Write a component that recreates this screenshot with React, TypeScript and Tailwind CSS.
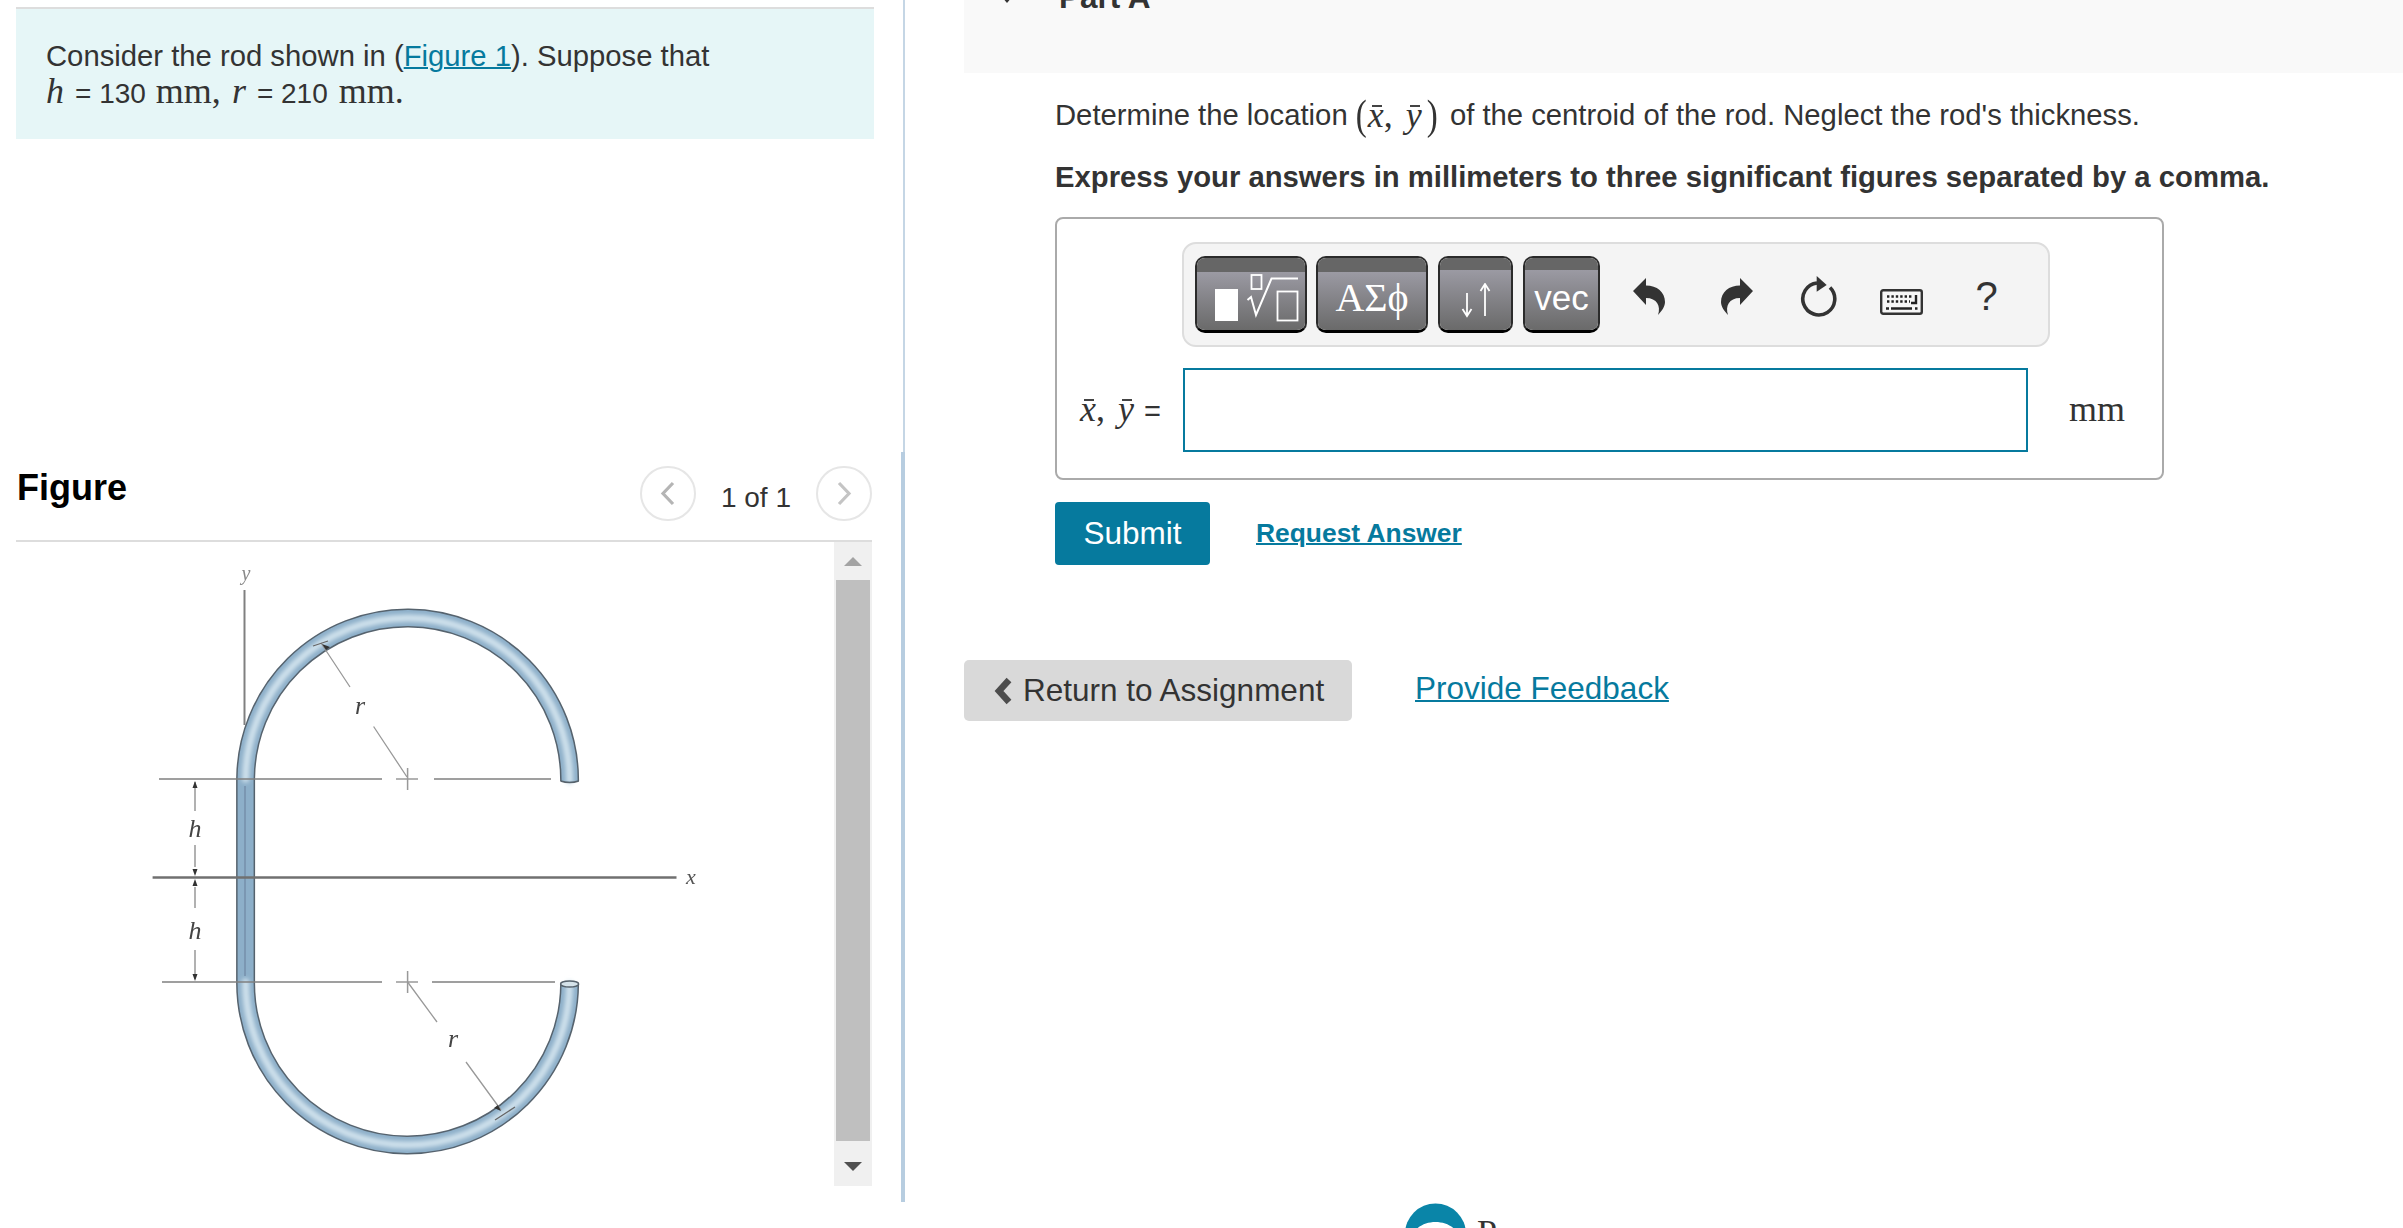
import type { ReactNode } from 'react';

const LINK = 'text-[#067a9e] underline decoration-2';
const MATH = "font-['Liberation_Serif',serif] text-[36px] leading-none";
const PAREN = "font-['Liberation_Serif',serif] text-[33px] leading-[36px] inline-block scale-y-125";

function Bar({ c }: { c: string }) {
  return (
    <span className="relative inline-block italic">
      {c}
      <span className="absolute left-[4px] top-[8px] w-[10px] h-[2px] bg-[#444]" />
    </span>
  );
}

function RodFigure() {
  const rod = 'M569.6 781 A162 162 0 0 0 245.6 779 L245.6 982 A162 162 0 0 0 569.6 984';
  const upper = 'M569.6 781 A162 162 0 0 0 245.6 779';
  const lower = 'M245.6 982 A162 162 0 0 0 569.6 984';
  const labelCls = "font-['Liberation_Serif',serif] italic";
  return (
    <svg className="flex-1 h-full" viewBox="16 542 818 644" width={818} height={644}>
      <defs>
        <filter id="soft" filterUnits="userSpaceOnUse" x="16" y="542" width="818" height="644">
          <feGaussianBlur stdDeviation="0.6" />
        </filter>
        <filter id="softer" filterUnits="userSpaceOnUse" x="16" y="542" width="818" height="644">
          <feGaussianBlur stdDeviation="2" />
        </filter>
      </defs>

      <g filter="url(#soft)">
        {/* y axis, behind the rod */}
        <path d="M244.5 590 V725" stroke="#808080" strokeWidth="2" fill="none" />
        <path d={rod} stroke="#55626d" strokeWidth="19" fill="none" />
        <path d={rod} stroke="#8dafc9" strokeWidth="16" fill="none" />
      </g>
      <g filter="url(#softer)">
        <path d={upper} stroke="#cfe1ec" strokeWidth="7" strokeLinecap="round" fill="none" />
        <path d={lower} stroke="#cfe1ec" strokeWidth="7" strokeLinecap="round" fill="none" />
      </g>

      <g filter="url(#soft)">
        <path d="M245 786 V976" stroke="#7691ad" strokeWidth="1.6" fill="none" />
        <ellipse cx="569.6" cy="984" rx="9" ry="3" fill="#d5e3ea" stroke="#56626c" strokeWidth="1.5" />
        <path d="M560.5 781 Q569.6 784 578.8 781" fill="#a9c6d9" stroke="#56626c" strokeWidth="1.5" />

        {/* centre lines */}
        <path d="M159 779 H382 M434 779 H551" stroke="#808080" strokeWidth="1.6" fill="none" />
        <path d="M162 982 H382 M432 982 H555" stroke="#808080" strokeWidth="1.6" fill="none" />
        <path d="M396 779 H418 M407.6 768 V790 M396 982 H418 M407.6 971 V993" stroke="#999" strokeWidth="1.5" fill="none" />
        <path d="M152.6 877.5 H676.5" stroke="#707070" strokeWidth="2.4" fill="none" />

        {/* h dimension */}
        <path d="M195 782 V811 M195 845 V867 M195 887 V908 M195 950 V979" stroke="#888" strokeWidth="1.3" fill="none" />
        <path d="M195 781 l-2.5 7 h5 Z M195 876 l-2.5 -7 h5 Z M195 879 l-2.5 7 h5 Z M195 981 l-2.5 -7 h5 Z" fill="#333" />

        {/* r dimensions */}
        <path d="M321 643 L350 687 M373.6 726.5 L407 777" stroke="#999" strokeWidth="1.3" fill="none" />
        <path d="M407.6 982 L437 1022 M466 1062 L501 1110" stroke="#999" strokeWidth="1.3" fill="none" />
        <path d="M313 646 L328 641 M495 1120 L515 1107" stroke="#666" strokeWidth="1.3" fill="none" />
        <path d="M322 644 l8 3 l-4 3 Z M501 1111 l-7 -3 l4 -3 Z" fill="#333" />

        <text x="246" y="580" fontSize="20" fill="#888" textAnchor="middle" className={labelCls}>y</text>
        <text x="360" y="714" fontSize="26" fill="#444" textAnchor="middle" className={labelCls}>r</text>
        <text x="453" y="1047" fontSize="26" fill="#444" textAnchor="middle" className={labelCls}>r</text>
        <text x="195" y="837" fontSize="26" fill="#444" textAnchor="middle" className={labelCls}>h</text>
        <text x="195" y="939" fontSize="26" fill="#444" textAnchor="middle" className={labelCls}>h</text>
        <text x="691" y="884" fontSize="22" fill="#555" textAnchor="middle" className={labelCls}>x</text>
      </g>
    </svg>
  );
}

function Scrollbar() {
  return (
    <div className="w-[38px] h-full bg-[#f0f0f0] flex flex-col items-center">
      <svg width="18" height="38" viewBox="0 0 18 38" className="shrink-0">
        <path d="M0 24 L9 15 L18 24 Z" fill="#a3a3a3" />
      </svg>
      <div className="w-[34px] flex-1 bg-[#bfbfbf]" />
      <svg width="18" height="45" viewBox="0 0 18 45" className="shrink-0">
        <path d="M0 21 H18 L9 30 Z" fill="#505050" />
      </svg>
    </div>
  );
}

function PagerButton({ dir }: { dir: 'left' | 'right' }) {
  return (
    <button className="w-[56px] h-[55px] rounded-full border-2 border-[#e6e6e6] flex items-center justify-center">
      <svg width="17" height="25" viewBox="0 0 17 25" fill="none" stroke={dir === 'left' ? '#b5b5b5' : '#c4c4c4'} strokeWidth="3.2">
        <path d={dir === 'left' ? 'M14 2 L4 12.5 L14 23' : 'M3 2 L13 12.5 L3 23'} />
      </svg>
    </button>
  );
}

function ToolButton({ width, band, children }: { width: string; band: string; children: ReactNode }) {
  return (
    <div className={`${width} h-[77px] shrink-0 rounded-[10px] border-2 border-b-[3px] border-[#2b2b2b] border-b-black overflow-hidden flex flex-col`}>
      <div className={`${band} bg-[#666666] shrink-0`} />
      <div className="flex-1 bg-linear-to-b from-[#9b9aa3] to-[#6a6a6a] flex items-center justify-center text-white">
        {children}
      </div>
    </div>
  );
}

function Toolbar() {
  return (
    <div className="ml-[125px] w-[868px] h-[105px] bg-[#f4f4f4] border-2 border-[#dddddd] rounded-[14px] flex items-center pl-[11px]">
      <ToolButton width="w-[112px]" band="h-[14px]">
        <svg width="88" height="50" viewBox="1213 274 88 50" className="-mt-[6px] ml-[12px] shrink-0" fill="none">
          <rect x="1215" y="290" width="23" height="32" fill="#fff" />
          <rect x="1251.5" y="276" width="10" height="14" stroke="#fff" strokeWidth="1.8" />
          <path d="M1247.5 301 L1251 298 L1256 316 L1271.5 279.5 H1298" stroke="#fff" strokeWidth="2" />
          <rect x="1277.5" y="292.5" width="20" height="29" stroke="#fff" strokeWidth="1.8" />
        </svg>
      </ToolButton>
      <div className="ml-[9px]">
        <ToolButton width="w-[112px]" band="h-[14px]">
          <span className="font-['Liberation_Serif',serif] text-[40px] leading-none -mt-[7px]">ΑΣϕ</span>
        </ToolButton>
      </div>
      <div className="ml-[10px]">
        <ToolButton width="w-[75px]" band="h-[12px]">
          <svg width="34" height="36" viewBox="0 0 34 36" fill="none" stroke="#fff" strokeWidth="1.8" className="mt-[1px]">
            <path d="M8 10 V33 M3.5 26 L8 33 L12.5 26" />
            <path d="M26 33 V1 M21.5 8 L26 1 L30.5 8" />
          </svg>
        </ToolButton>
      </div>
      <div className="ml-[10px]">
        <ToolButton width="w-[77px]" band="h-[12px]">
          <span className="text-[35px] leading-none -mt-[5px]">vec</span>
        </ToolButton>
      </div>
      <svg width="32" height="37" viewBox="0 0 32 37" className="ml-[33px] mt-1" fill="#333">
        <path d="M0 13 L13 0 V7.5 C24 7.5 32 14 32 24 C32 29 28.5 33 25 37 C28 28 24 20 13 20 V27 Z" />
      </svg>
      <svg width="32" height="37" viewBox="0 0 32 37" className="ml-[56px] mt-1 -scale-x-100" fill="#333">
        <path d="M0 13 L13 0 V7.5 C24 7.5 32 14 32 24 C32 29 28.5 33 25 37 C28 28 24 20 13 20 V27 Z" />
      </svg>
      <svg width="37" height="41" viewBox="0 0 37 41" className="ml-[47px] mt-1" fill="none">
        <path d="M17 7 A16 16 0 1 0 30 11.5" stroke="#333" strokeWidth="3.6" />
        <path d="M16.7 0 L26.7 9 L16.7 15.7 Z" fill="#333" />
      </svg>
      <svg width="43" height="26" viewBox="0 0 43 26" className="ml-[43px] mt-[15px]" fill="none">
        <rect x="1.2" y="1.2" width="40.6" height="23.6" rx="2" stroke="#333" strokeWidth="2.4" fill="#f6f6f6" />
        <path d="M7 7.5 H33 M7 12.5 H30" stroke="#222" strokeWidth="2.6" strokeDasharray="2.4 2" />
        <path d="M36 6 V14 H31 M6 19.5 H9 M11 19.5 H32 M35 19.5 H37.5" stroke="#222" strokeWidth="2.4" />
      </svg>
      <span className="ml-[52px] w-[23px] text-center text-[40px] leading-none text-[#333] mt-[2px]">?</span>
    </div>
  );
}

export default function App() {
  return (
    <div className="w-[2403px] h-[1228px] overflow-hidden bg-white flex font-['Liberation_Sans',Arial,sans-serif] text-[#333]">
      {/* Left pane */}
      <div className="w-[901px] h-[1202px] shrink-0 pt-[7px] pl-4">
        <div className="w-[858px] h-[132px] bg-[#e6f6f7] border-t-2 border-[#dddddd] pt-[29px] pl-[30px] text-[29.25px] leading-[36px]">
          <div>
            Consider the rod shown in (<a className={LINK}>Figure 1</a>). Suppose that
          </div>
          <div className="-mt-[1px] flex items-baseline text-[28px]">
            <span className={`${MATH} italic`}>h</span>
            <span className="ml-[11px]">= 130</span>
            <span className={`${MATH} ml-[10px]`}>mm,</span>
            <span className={`${MATH} italic ml-[11px]`}>r</span>
            <span className="ml-[11px]">= 210</span>
            <span className={`${MATH} ml-[11px]`}>mm.</span>
          </div>
        </div>

        <div className="w-[856px] mt-[327px] h-[55px] flex items-start">
          <h2 className="pl-px mt-[2px] text-[36px] leading-[40px] font-bold text-black flex-1">Figure</h2>
          <PagerButton dir="left" />
          <span className="mx-[25px] mt-[14px] text-[28px] leading-[36px]">1 of 1</span>
          <PagerButton dir="right" />
        </div>

        <div className="w-[856px] mt-[19px] h-[646px] border-t-2 border-[#dddddd] flex">
          <RodFigure />
          <Scrollbar />
        </div>
      </div>

      {/* Divider */}
      <div className="w-[4px] h-[1202px] shrink-0 flex flex-col items-end">
        <div className="w-[2px] h-[452px] bg-[#c5d6e5]" />
        <div className="w-[4px] flex-1 bg-[#b7cde0]" />
      </div>

      {/* Right pane */}
      <div className="flex-1 pl-[59px]">
        <div className="h-[73px] bg-[#f9f9f9] overflow-hidden">
          <div className="-mt-[21px] pl-[38px] flex items-start">
            <svg width="10" height="6" viewBox="0 0 10 6" className="mt-[18px] shrink-0">
              <path d="M0 0 H10 L5 6 Z" fill="#333" />
            </svg>
            <span className="ml-[47px] text-[31.5px] leading-[36px] font-bold">Part A</span>
          </div>
        </div>

        <div className="pl-[91px]">
          <p className="mt-[24px] text-[29.25px] leading-[36px] flex items-center whitespace-pre">
            <span>Determine the location </span>
            <span className={PAREN}>(</span>
            <span className={`${MATH} ml-[1px] flex items-baseline`}>
              <Bar c="x" />
              <span>,</span>
              <span className="ml-[13px]"><Bar c="y" /></span>
            </span>
            <span className={`${PAREN} ml-[5px]`}>)</span>
            <span className="ml-[4px]"> of the centroid of the rod. Neglect the rod's thickness.</span>
          </p>
          <p className="mt-[26px] text-[29.25px] leading-[36px] font-bold">
            Express your answers in millimeters to three significant figures separated by a comma.
          </p>

          <div className="mt-[22px] w-[1109px] h-[263px] border-2 border-[#aaaaaa] rounded-[8px] pt-[23px]">
            <Toolbar />
            <div className="mt-[21px] pl-[23px] flex items-center">
              <span className="w-[103px] -mt-[2px] shrink-0 flex items-baseline">
                <span className={MATH}><Bar c="x" />,</span>
                <span className={`${MATH} ml-[13px]`}><Bar c="y" /></span>
                <span className="ml-[10px] text-[29px] leading-none">=</span>
              </span>
              <input className="w-[845px] h-[84px] border-2 border-[#067a9e] outline-none bg-white" />
              <span className={`${MATH} ml-[41px] -mt-[2px]`}>mm</span>
            </div>
          </div>

          <div className="mt-[22px] flex items-center">
            <button className="w-[155px] h-[63px] rounded-[4px] bg-[#067a9e] text-white text-[31.5px]">Submit</button>
            <a className={`${LINK} ml-[46px] text-[26.4px] font-bold`}>Request Answer</a>
          </div>
        </div>

        <div className="mt-[95px] flex items-start">
          <button className="w-[388px] h-[61px] rounded-[5px] bg-[#d9d9d9] flex items-center pl-[29px] text-[31.5px]">
            <svg width="19" height="28" viewBox="0 0 19 28" fill="none" stroke="#4d4d4d" strokeWidth="6.5" className="shrink-0">
              <path d="M16 3 L6 14 L16 25" />
            </svg>
            <span className="ml-[11px]">Return to Assignment</span>
          </button>
          <a className={`${LINK} ml-[63px] text-[31.5px] leading-[57px]`}>Provide Feedback</a>
        </div>

        {/* Pearson logo, cut off by the bottom of the page */}
        <div className="mt-[482px] ml-[441px] flex items-start">
          <svg width="61" height="62" viewBox="0 0 61 62" className="shrink-0">
            <circle cx="30.5" cy="31" r="30.5" fill="#0a85a8" />
            <path d="M8 31 C16 15 45 15 53 31 C44 23 17 23 8 31 Z" fill="#fff" />
            <path d="M22 29 C26 25 35 25 39 29 Z" fill="#fff" />
          </svg>
          <span className="ml-[11px] mt-[12px] font-['Liberation_Serif',serif] text-[36px] leading-none">Pearson</span>
        </div>
      </div>
    </div>
  );
}
